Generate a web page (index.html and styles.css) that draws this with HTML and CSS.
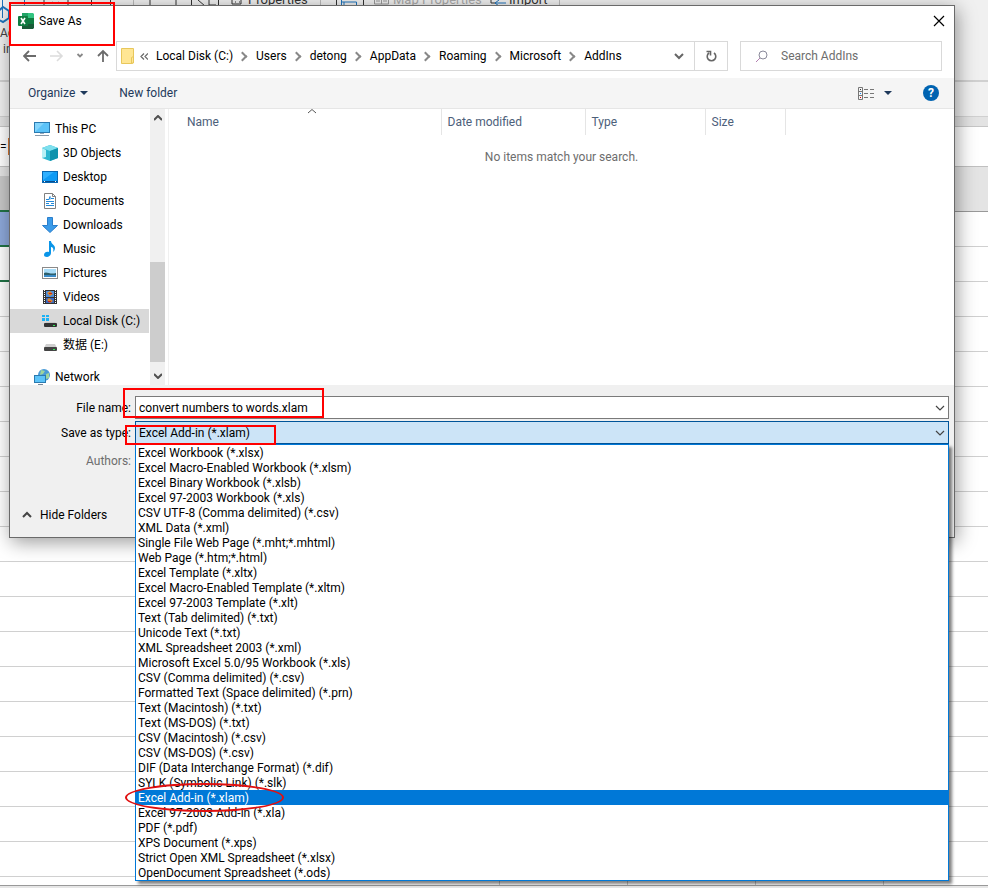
FILE: index.html
```
<!DOCTYPE html>
<html lang="en">
<head>
    <meta charset="UTF-8">
    <meta name="viewport" content="width=device-width, initial-scale=1.0">
    <title>Save As</title>
    <link rel="stylesheet" href="styles.css">
</head>
<body>
    <!-- Excel window behind the dialog -->
    <div class="excel">
        <div class="ribbon">
            <svg class="ribbon-art" width="570" height="50" fill="none" stroke="#333">
                <path d="M2.500 0v18M24.500 0v6" stroke="#1e74bd"/>
                <path d="M-4 13l7-6 6 4v7l-6 4-6-3" stroke="#1e74bd" stroke-width="2"/>
                <path d="M44 0v6M68 0v6M52 2a5 5 0 0 0 7 0M91.500 0v6M110.500 0v6M96 3h4m4 0h4M150 6V0m26 0v6M191.500 0v6M218.500 0v6M198 0l7 6M209 0v5h7M232 0v4h9V0M235 2h1m3 0h1M336.500 0v6M363.500 0v6M491 0v3h5"/>
                <path d="M341.500 0v6M356.500 6V2h-15M344 2v4M506 3h-10m3-3l-4 3 4 3" stroke="#1e74bd"/>
                <path d="M374.500 0v4h14V0M381.500 0v4M376 1h4m3 0h4" stroke="#999"/>
                <path d="M133.500 0v6M320.500 0v6M559.500 0v6" stroke="#bbb"/>
            </svg>
            <div class="ribbon-labels">
                <span>Properties</span>
                <span class="disabled">Map Properties</span>
                <span>Import</span>
            </div>
            <div class="addins">Add-<br>&nbsp;ins</div>
        </div>
        <div class="ribbon-foot"></div>
        <div class="ribbon-gap"></div>
        <div class="formula-bar"><span>=</span><i></i></div>
        <div class="col-head"><i></i></div>
        <div class="sheet">
            <div class="row selected"><i></i></div><div class="row active"><i></i></div><div class="row"></div>
            <div class="row"></div><div class="row"></div><div class="row"></div><div class="row"></div>
            <div class="row"></div><div class="row"></div><div class="row"></div><div class="row"></div>
            <div class="row"></div><div class="row"></div><div class="row"></div><div class="row"></div>
            <div class="row"></div><div class="row"></div><div class="row"></div><div class="row"></div>
            <div class="row last"><i></i><i></i><i></i><i></i></div>
        </div>
        <div class="sheet-foot"></div>
    </div>

    <div class="dialog">
        <div class="title-bar">
            <svg width="16" height="16" viewBox="0 0 16 16">
                <path fill="#21a366" d="M4 0h6v5H4z"/><path fill="#33c481" d="M10 0h5l1 1v4h-6z"/>
                <path fill="#107c41" d="M10 5h6v6h-6z"/><path fill="#185c37" d="M4 5h6v6h6v4l-1 1H4z"/>
                <rect y="3" width="10" height="10" rx="1" fill="#107c41"/>
                <path d="M3 5l4 6M7 5l-4 6" stroke="#fff" stroke-width="1.600"/>
            </svg>
            <h1>Save As</h1>
            <button class="close" aria-label="Close">
                <svg width="12" height="12" stroke="#000" stroke-width="1.200"><path d="M1 1l10 10M11 1L1 11"/></svg>
            </button>
        </div>

        <div class="nav">
            <div class="nav-buttons">
                <button aria-label="Back"><svg width="14" height="12" fill="none" stroke="#6b6b6b" stroke-width="1.800"><path d="M13 6H2M6 1L1 6l5 5"/></svg></button>
                <button aria-label="Forward"><svg width="14" height="12" fill="none" stroke="#dcdcdc" stroke-width="1.600"><path d="M0 6h12M7 1l5 5-5 5"/></svg></button>
                <button aria-label="Recent"><svg width="8" height="6" fill="none" stroke="#888" stroke-width="1.800"><path d="M1.500 1L4 3.500 6.500 1"/></svg></button>
                <button aria-label="Up"><svg width="12" height="14" fill="none" stroke="#6b6b6b" stroke-width="1.800"><path d="M6 13V2M1 7l5-5 5 5"/></svg></button>
            </div>
            <div class="address">
                <svg width="13" height="16"><path d="M0.500 0.500h12v9l-1 1v5h-11z" fill="#ffe694" stroke="#e8c75b"/><path d="M10.500 15V9.500l2-1V15z" fill="#ffe694" stroke="#e8c75b"/></svg>
                <svg class="more" width="8" height="7" fill="none" stroke="#666" stroke-width="1.200"><path d="M4 0.500l-3 3 3 3M8 0.500l-3 3 3 3"/></svg>
                <a href="#">Local Disk (C:)</a>
                <a href="#">Users</a>
                <a href="#">detong</a>
                <a href="#">AppData</a>
                <a href="#">Roaming</a>
                <a href="#">Microsoft</a>
                <a href="#">AddIns</a>
                <button class="drop" aria-label="Previous locations"><svg width="10" height="7" fill="none" stroke="#666" stroke-width="2"><path d="M1 1l4 4 4-4"/></svg></button>
                <button class="refresh" aria-label="Refresh"><svg width="12" height="12" fill="none" stroke="#666" stroke-width="1.600"><path d="M9 3a4.300 4.300 0 1 1-5 0M1.500 1.500h4v4"/></svg></button>
            </div>
            <div class="search">
                <svg width="13" height="13" fill="none" stroke="#8a8a9a"><circle cx="8" cy="5" r="4"/><path d="M5 8l-4 4" stroke="#b27fb0"/></svg>
                <input type="text" placeholder="Search AddIns" aria-label="Search AddIns">
            </div>
        </div>

        <div class="toolbar">
            <button>Organize <svg width="8" height="4"><path d="M0 0h8L4 4z" fill="#1e395b"/></svg></button>
            <button>New folder</button>
            <button class="view" aria-label="Change view">
                <svg width="17" height="13" fill="none" stroke="#777">
                    <path d="M0.500 0.500h4v12h-4zM0.500 4.500h4M0.500 8.500h4M6 2.500h4m2 0h4M6 6.500h4m2 0h4M6 10.500h4m2 0h4"/>
                    <path d="M2 2.500h1" stroke="#333"/><path d="M2 6.500h1" stroke="#18f"/><path d="M2 10.500h1" stroke="#d00"/>
                </svg>
                <svg width="8" height="4"><path d="M0 0h8L4 4z" fill="#1e395b"/></svg>
            </button>
            <button class="help" aria-label="Help">?</button>
        </div>

        <div class="body">
            <ul class="tree">
                <li class="root">
                    <svg width="16" height="16"><rect x="0.500" y="1.500" width="15" height="10" fill="#5cc3f8" stroke="#2a7ab0"/><path d="M1 11V2h9z" fill="#84d5fc"/><path d="M6 12h4v1H6z" fill="#9ab"/><path d="M1 14.500h14" stroke="#8899aa"/></svg>
                    This PC
                </li>
                <li>
                    <svg width="16" height="16"><path d="M0 3l8-3 8 3v10l-8 3-8-3z" fill="#2cb5cf"/><path d="M0 3l8-3 8 3-8 3z" fill="#7fe0ee"/><path d="M8 6l8-3v10l-8 3z" fill="#0f93ad"/><path d="M0 3l4 2v7l-4 1z" fill="#b8f0f6"/></svg>
                    3D Objects
                </li>
                <li>
                    <svg width="16" height="16"><rect x="0.500" y="2.500" width="15" height="11" fill="#0f9bf5" stroke="#0869b5"/><path d="M1 11V3h11z" fill="#2fb0ff"/><path d="M1 12.500h14" stroke="#074b8a"/><path d="M2 12.500h1m10 0h1" stroke="#fff"/></svg>
                    Desktop
                </li>
                <li>
                    <svg width="16" height="16" fill="none"><path d="M2.500 0.500h8l3 3v12h-11z" fill="#fff" stroke="#808080"/><path d="M10.500 0.500v3h3" stroke="#808080"/><path d="M4 6.500h3l1-3v3M9 5.500h3M4 8.500h8M4 10.500h3m2 0h3M4 12.500h8" stroke="#2389d8"/></svg>
                    Documents
                </li>
                <li>
                    <svg width="16" height="16"><path d="M5.500 0.500h5v8h5L8 15.500.500 8.500h5z" fill="#3b9be9" stroke="#2a7ecb"/></svg>
                    Downloads
                </li>
                <li>
                    <svg width="16" height="16"><path d="M7 0h2c0 3 4 4 4 7 0 2-1 3-2 4 1-3 0-5-2-5v6c0 2-2 4-4 4s-3-1-3-2c0-2 2-4 5-3z" fill="#0a95e8"/></svg>
                    Music
                </li>
                <li>
                    <svg width="16" height="16"><rect x="0.500" y="2.500" width="15" height="11" fill="#fff" stroke="#8a8a8a"/><path d="M2 4h12v8H2z" fill="#a8dcf8"/><path d="M2 8c3-2 6 2 12 0v2H2z" fill="#2d5f6c"/><path d="M2 10h12v2H2z" fill="#3a8bc8"/></svg>
                    Pictures
                </li>
                <li>
                    <svg width="16" height="16"><path d="M1 1h14v14H1z" fill="#333"/><path d="M2.500 1v14M13.500 1v14" stroke="#fff" stroke-dasharray="1 1"/><path d="M4 2h8v6H4z" fill="#4f8ddb"/><path d="M4 9h8v5H4z" fill="#3b69c0"/><path d="M5 4l3-2 3 3-3 2zM5 11l2-2 4 3-3 2z" fill="#d88a2a"/><path d="M7 4h3v1H7zM6 12h3v1H6z" fill="#c22"/></svg>
                    Videos
                </li>
                <li class="current">
                    <svg width="16" height="16"><path d="M0 2h3v2H0zM4 2h3v2H4zM0 5h3v3H0zM4 5h3v3H4z" fill="#1cb2f5"/><path d="M4 9h9l2 2H2z" fill="#c8c8c8"/><rect x="2" y="10" width="13" height="4" rx="1" fill="#333"/><path d="M11 12.500h2" stroke="#3e5"/></svg>
                    Local Disk (C:)
                </li>
                <li>
                    <svg width="16" height="16"><path d="M4 7h9l2 4H2z" fill="#cfcfcf"/><rect x="2" y="10" width="13" height="4" rx="1" fill="#444"/><path d="M11 12.500h2" stroke="#3e5"/></svg>
                    <span>数据 (E:)</span>
                </li>
                <li class="root network">
                    <svg width="16" height="16"><circle cx="10" cy="6" r="6" fill="#4a9bd6"/><path d="M7 1l4 1-2 3-3 1zM12 5l3-1v5l-3 1z" fill="#9fd49c"/><rect x="0.500" y="6.500" width="11" height="7" fill="#5cc3f8" stroke="#2a7ab0"/><path d="M4 15.500h5" stroke="#778899"/></svg>
                    Network
                </li>
            </ul>
            <div class="scrollbar">
                <svg width="8" height="6" fill="none" stroke="#505050" stroke-width="2"><path d="M0 5l4-4 4 4"/></svg>
                <div class="thumb"></div>
                <svg width="8" height="6" fill="none" stroke="#505050" stroke-width="2"><path d="M0 1l4 4 4-4"/></svg>
            </div>
            <div class="files">
                <table>
                    <thead>
                        <tr>
                            <th class="name">Name <svg width="8" height="5" fill="none" stroke="#555"><path d="M0 4l4-3.500L8 4"/></svg></th>
                            <th class="date">Date modified</th>
                            <th class="type">Type</th>
                            <th class="size">Size</th>
                            <th></th>
                        </tr>
                    </thead>
                    <tbody>
                        <tr><td colspan="5">No items match your search.</td></tr>
                    </tbody>
                </table>
            </div>
        </div>

        <form class="details">
            <label for="file-name">File name:</label>
            <div class="field">
                <input type="text" id="file-name" value="convert numbers to words.xlam">
                <svg width="10" height="6" fill="none" stroke="#444" stroke-width="1.200"><path d="M1 1l4 4 4-4"/></svg>
            </div>
            <label for="save-type">Save as type:</label>
            <div class="field open">
                <select id="save-type"><option>Excel Add-in (*.xlam)</option></select>
                <svg width="10" height="6" fill="none" stroke="#444" stroke-width="1.200"><path d="M1 1l4 4 4-4"/></svg>
                <ul class="options" role="listbox" aria-label="Save as type">
                    <li role="option">Excel Workbook (*.xlsx)</li>
                    <li role="option">Excel Macro-Enabled Workbook (*.xlsm)</li>
                    <li role="option">Excel Binary Workbook (*.xlsb)</li>
                    <li role="option">Excel 97-2003 Workbook (*.xls)</li>
                    <li role="option">CSV UTF-8 (Comma delimited) (*.csv)</li>
                    <li role="option">XML Data (*.xml)</li>
                    <li role="option">Single File Web Page (*.mht;*.mhtml)</li>
                    <li role="option">Web Page (*.htm;*.html)</li>
                    <li role="option">Excel Template (*.xltx)</li>
                    <li role="option">Excel Macro-Enabled Template (*.xltm)</li>
                    <li role="option">Excel 97-2003 Template (*.xlt)</li>
                    <li role="option">Text (Tab delimited) (*.txt)</li>
                    <li role="option">Unicode Text (*.txt)</li>
                    <li role="option">XML Spreadsheet 2003 (*.xml)</li>
                    <li role="option">Microsoft Excel 5.0/95 Workbook (*.xls)</li>
                    <li role="option">CSV (Comma delimited) (*.csv)</li>
                    <li role="option">Formatted Text (Space delimited) (*.prn)</li>
                    <li role="option">Text (Macintosh) (*.txt)</li>
                    <li role="option">Text (MS-DOS) (*.txt)</li>
                    <li role="option">CSV (Macintosh) (*.csv)</li>
                    <li role="option">CSV (MS-DOS) (*.csv)</li>
                    <li role="option">DIF (Data Interchange Format) (*.dif)</li>
                    <li role="option">SYLK (Symbolic Link) (*.slk)</li>
                    <li role="option" aria-selected="true">Excel Add-in (*.xlam)</li>
                    <li role="option">Excel 97-2003 Add-in (*.xla)</li>
                    <li role="option">PDF (*.pdf)</li>
                    <li role="option">XPS Document (*.xps)</li>
                    <li role="option">Strict Open XML Spreadsheet (*.xlsx)</li>
                    <li role="option">OpenDocument Spreadsheet (*.ods)</li>
                </ul>
            </div>
            <span class="authors">Authors:</span>
            <button type="button" class="hide-folders">
                <svg width="10" height="7" fill="none" stroke="#444" stroke-width="2"><path d="M1 6l4-4 4 4"/></svg>
                Hide Folders
            </button>
        </form>
    </div>

    <!-- red marks -->
    <div class="mark mark-title"></div>
    <div class="mark mark-name"></div>
    <div class="mark mark-type"></div>
    <div class="mark mark-option"></div>
</body>
</html>
```
FILE: styles.css
```
* {
    box-sizing: border-box;
}
body {
    position: relative;
    margin: 0;
    min-height: 100vh;
    overflow: hidden;
    font-family: Roboto, "Noto Sans CJK SC", sans-serif;
    font-size: 12px;
    line-height: 16px;
    color: #000;
    background: #fff;
}
button, input, select {
    font: inherit;
    color: inherit;
    margin: 0;
    padding: 0;
    border: none;
    background: none;
}
ul {
    list-style: none;
    margin: 0;
    padding: 0;
}
svg {
    flex: none;
}

/* window behind */
.excel {
    height: 100vh;
    overflow: hidden;
    display: flex;
    flex-direction: column;
}
.excel > div {
    flex: none;
}
.ribbon {
    position: relative;
    height: 82px;
    overflow: hidden;
    background: #f0f0f0;
    border-bottom: 2px solid #d0d0d0;
}
.ribbon-art {
    position: absolute;
    left: 0;
    top: 0;
}
.ribbon-labels {
    display: grid;
    grid-template-columns: 145px 116px auto;
    margin: -8px 0 0 248px;
    font-size: 13px;
    color: #333;
}
.ribbon-labels .disabled {
    color: #aaa;
}
.addins {
    margin-top: 17px;
    color: #444;
}
.ribbon-foot {
    height: 34px;
    background: #f0f0f0;
}
.ribbon-gap {
    height: 11px;
    background: #e3e3e3;
    border-top: 1px solid #d0d0d0;
    border-bottom: 1px solid #c6c6c6;
}
.formula-bar {
    display: flex;
    align-items: center;
    gap: 1px;
    height: 39px;
}
.formula-bar i {
    width: 20px;
    height: 17px;
    background: #d8752f;
}
.col-head {
    height: 46px;
    background: #e4e4e4;
    border-top: 1px solid #c0c0c0;
    border-bottom: 1px solid #999;
}
.col-head i {
    display: block;
    width: 120px;
    height: 36px;
    margin-top: 9px;
    background: #c8c8c8;
    border-bottom: 2px solid #217346;
}
.row {
    height: 35px;
    border-bottom: 1px solid #d0d0d0;
}
.selected i, .active i {
    display: block;
    width: 120px;
    height: 35px;
    border-bottom: 2px solid #217346;
}
.selected i {
    background: #8ea9db;
}
.last {
    display: grid;
    grid-template-columns: 500px 128px 128px 128px;
    height: 8px;
    border: none;
}
.last i {
    border-right: 1px solid #c8c8c8;
}
.sheet-foot {
    height: 20px;
    background: #e6e6e6;
    border-top: 1px solid #999;
}

/* dialog */
.dialog {
    position: absolute;
    left: 9px;
    right: 33px;
    top: 5px;
    border: 1px solid #6a6a6a;
    background: #fff;
    box-shadow: 2px 4px 18px rgba(0, 0, 0, 0.4);
}
.title-bar {
    display: flex;
    align-items: center;
    gap: 5px;
    height: 29px;
    padding: 0 9px 0 8px;
}
h1 {
    flex: 1;
    margin: 0;
    font-size: 12px;
    font-weight: 400;
}
.close {
    display: flex;
}
.nav {
    display: flex;
    height: 43px;
    padding: 6px 12px 7px 13px;
}
.nav-buttons {
    display: flex;
    align-items: center;
    justify-content: space-between;
    width: 86px;
    margin-right: 7px;
}
.nav-buttons button {
    display: flex;
}
.address {
    flex: 1;
    display: flex;
    align-items: center;
    padding-left: 4px;
    border: 1px solid #d9d9d9;
}
.more {
    margin: 0 8px 0 6px;
}
.address a {
    display: flex;
    align-items: center;
    color: #000;
    text-decoration: none;
    white-space: nowrap;
}
.address a + a::before {
    content: "";
    width: 5px;
    height: 5px;
    margin: 0 10px 0 6px;
    border: solid #888;
    border-width: 2px 2px 0 0;
    transform: rotate(45deg);
}
.drop {
    margin-left: auto;
    padding: 0 10px;
}
.refresh {
    display: flex;
    align-items: center;
    justify-content: center;
    align-self: stretch;
    width: 33px;
    border-left: 1px solid #d9d9d9;
}
.search {
    display: flex;
    align-items: center;
    gap: 13px;
    width: 202px;
    margin-left: 12px;
    padding-left: 14px;
    border: 1px solid #d9d9d9;
}
.search input {
    flex: 1;
    min-width: 0;
    outline: none;
}
.search input::placeholder {
    color: #6d6d6d;
    opacity: 1;
}
.toolbar {
    display: flex;
    align-items: center;
    gap: 31px;
    height: 31px;
    padding: 0 15px 0 18px;
    background: #f5f5f5;
    border-bottom: 1px solid #e6e6e6;
    color: #1e395b;
}
.toolbar button {
    display: flex;
    align-items: center;
    gap: 5px;
}
.toolbar .view {
    gap: 9px;
    margin-left: auto;
}
.toolbar .help {
    justify-content: center;
    width: 16px;
    height: 16px;
    border-radius: 50%;
    background: #0063b1;
    color: #fff;
    font-weight: 700;
}
.body {
    display: flex;
    height: 276px;
}
.tree {
    width: 140px;
    padding-top: 8px;
    overflow: hidden;
}
.tree li {
    display: flex;
    align-items: center;
    gap: 5px;
    height: 24px;
    margin-right: 1px;
    padding-left: 32px;
    white-space: nowrap;
}
.tree .root {
    padding-left: 24px;
}
.tree .current {
    background: #d9d9d9;
}
.tree .network {
    margin-top: 8px;
}
.scrollbar {
    display: flex;
    flex-direction: column;
    align-items: center;
    justify-content: space-between;
    width: 15px;
    padding: 6px 0;
    background: #f0f0f0;
}
.thumb {
    width: 100%;
    height: 100px;
    margin: auto 0 11px;
    background: #cdcdcd;
}
.files {
    flex: 1;
    margin-left: 3px;
    border-left: 1px solid #f0f0f0;
}
table {
    width: 100%;
    border-collapse: collapse;
    table-layout: fixed;
}
th {
    height: 26px;
    padding: 0 0 0 6px;
    border-right: 1px solid #e5e5e5;
    font-weight: 400;
    text-align: left;
    color: #4c607a;
}
th:last-child {
    border: none;
}
.name {
    position: relative;
    width: 272px;
    padding-left: 18px;
}
.name svg {
    position: absolute;
    left: 139px;
    top: 0;
}
.date {
    width: 144px;
}
.type {
    width: 120px;
}
.size {
    width: 80px;
}
td {
    height: 44px;
    padding: 0;
    text-align: center;
    color: #6d6d6d;
}

/* file name and type */
.details {
    display: grid;
    grid-template-columns: 121px 1fr;
    grid-template-rows: 23px 23px 30px;
    row-gap: 2px;
    column-gap: 4px;
    align-items: center;
    height: 152px;
    padding: 11px 5px 0 0;
    background: #f0f0f0;
}
.details label, .authors {
    text-align: right;
}
.authors {
    color: #6d6d6d;
}
.field {
    position: relative;
    display: flex;
    align-items: center;
    height: 23px;
    padding: 0 3px;
    border: 1px solid #7a7a7a;
    background: #fff;
}
.field input, .field select {
    flex: 1;
    appearance: none;
    outline: none;
}
.field.open {
    border-color: #005499;
    background: #cce4f7;
}
.options {
    position: absolute;
    left: -1px;
    right: -1px;
    top: 22px;
    border: 1px solid #0078d7;
    background: #fff;
    box-shadow: 3px 3px 3px rgba(0, 0, 0, 0.5);
}
.options li {
    height: 15px;
    padding: 1px 0 0 2px;
    line-height: 14px;
}
.options li[aria-selected] {
    background: #0078d7;
    color: #fff;
}
.hide-folders {
    grid-column: 1;
    display: flex;
    align-items: center;
    gap: 8px;
    margin: 14px 0 0 12px;
    white-space: nowrap;
}

/* annotations */
.mark {
    position: absolute;
    border: 2px solid #f00;
}
.mark-title {
    left: 9px;
    top: 2px;
    width: 106px;
    height: 44px;
}
.mark-name {
    left: 123px;
    top: 388px;
    width: 201px;
    height: 30px;
}
.mark-type {
    left: 125px;
    top: 425px;
    width: 151px;
    height: 20px;
}
.mark-option {
    left: 125px;
    top: 783px;
    width: 159px;
    height: 29px;
    border-color: #e01010;
    border-radius: 50%;
}
```
